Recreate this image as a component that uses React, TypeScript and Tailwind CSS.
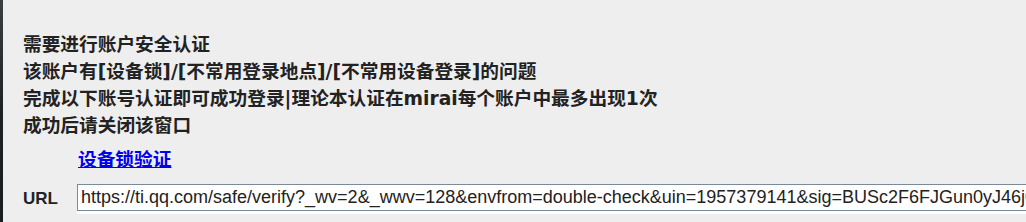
import React from "react";

const lines = [
  "需要进行账户安全认证",
  "该账户有[设备锁]/[不常用登录地点]/[不常用设备登录]的问题",
  "完成以下账号认证即可成功登录|理论本认证在mirai每个账户中最多出现1次",
  "成功后请关闭该窗口",
];

const url =
  "https://ti.qq.com/safe/verify?_wv=2&_wwv=128&envfrom=double-check&uin=1957379141&sig=BUSc2F6FJGun0yJ46j0mYyt9fOh9LQ6qwnAd3hWVjKBQ";

export default function App() {
  return (
    <div className="flex h-[222px] w-[1026px] overflow-hidden bg-[#eeeeee]">
      {/* window edge */}
      <div className="w-[3px] shrink-0 bg-gradient-to-b from-[#3c3f41] via-[#1d2226] to-[#1a1d21]" />

      <div className="flex min-w-0 flex-1 flex-col pl-[20px] pt-[31px] text-[#222] font-['Liberation_Sans','Noto_Sans_CJK_SC',sans-serif]">
        {/* message */}
        <div className="flex flex-col text-[18.7px] font-bold leading-[27px] font-['DejaVu_Sans','Noto_Sans_CJK_SC',sans-serif]">
          {lines.map((l) => (
            <div key={l} className="whitespace-nowrap">
              {l}
            </div>
          ))}
        </div>

        {/* link */}
        <div className="mt-[7px] pl-[55px] leading-[27px]">
          <a href="#" className="text-[18.7px] font-bold text-[#0000ee] underline">
            设备锁验证
          </a>
        </div>

        {/* url row */}
        <div className="mt-[10px] flex items-center">
          <span className="w-[54px] shrink-0 text-[17px] font-bold">URL</span>
          <div className="min-w-0 flex-1 border-b-[3px] border-white">
            <input
              readOnly
              value={url}
              className="block h-[27px] w-[1000px] border border-[#7a8a99] bg-white px-[3px] text-[18px] text-[#222] outline-none font-['Liberation_Sans',Arial,sans-serif]"
            />
          </div>
        </div>
      </div>
    </div>
  );
}
